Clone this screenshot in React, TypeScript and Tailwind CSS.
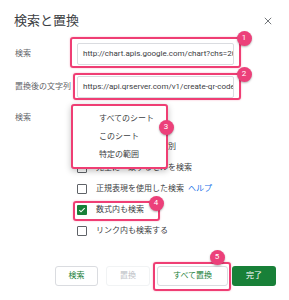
import React from "react";

const FONT = { fontFamily: 'Roboto, "Noto Sans CJK JP", "Noto Sans", sans-serif' };

function Badge({ n, x, y }: { n: number; x: number; y: number }) {
  return (
    <div
      className="absolute w-[15px] h-[15px] rounded-full bg-[#ec407a] text-white text-[8px] leading-none flex items-center justify-center shadow-[0_1px_2px_rgba(0,0,0,0.3)]"
      style={{ left: x - 7.5, top: y - 7.5 }}
    >
      {n}
    </div>
  );
}

function Pink({ x, y, w, h }: { x: number; y: number; w: number; h: number }) {
  return (
    <div
      className="absolute border-2 border-[#ef3e74] rounded-[3px] shadow-[0_0_2px_rgba(239,62,116,0.4)]"
      style={{ left: x, top: y, width: w, height: h }}
    />
  );
}

function Checkbox({ checked }: { checked?: boolean }) {
  if (checked) {
    return (
      <div className="w-[10px] h-[10px] rounded-[1px] bg-[#188038] flex items-center justify-center shrink-0">
        <svg width="8" height="8" viewBox="0 0 24 24">
          <path d="M4 12.5l5 5L20 6.5" fill="none" stroke="white" strokeWidth="3.2" />
        </svg>
      </div>
    );
  }
  return <div className="w-[10px] h-[10px] rounded-[1px] border-[1.5px] border-[#5f6368] shrink-0" />;
}

function CheckRow({ label, checked, extra }: { label: string; checked?: boolean; extra?: React.ReactNode }) {
  return (
    <div className="flex items-center h-[21px] pl-[77px]">
      <Checkbox checked={checked} />
      <span className="ml-[9px] text-[8px] text-[#3c4043] whitespace-nowrap">{label}</span>
      {extra}
    </div>
  );
}

export default function App() {
  return (
    <div className="relative w-[289px] h-[300px] bg-white overflow-hidden" style={FONT}>
      <div className="pt-[12px]">
        <div className="flex items-center justify-between h-[18px] pl-[14px] pr-[17px]">
          <span className="text-[13px] leading-[18px] text-[#3c4043]">検索と置換</span>
          <svg width="8" height="8" viewBox="0 0 10 10">
            <path d="M1 1L9 9M9 1L1 9" stroke="#5f6368" strokeWidth="1.1" />
          </svg>
        </div>

        <div className="flex items-center mt-[13px] pl-[15px]">
          <span className="w-[62px] text-[8px] text-[#5f6368] whitespace-nowrap">検索</span>
          <div className="w-[157px] h-[22px] border border-[#dadce0] rounded-[2px] pl-[5px] flex items-center overflow-hidden">
            <span className="text-[8px] text-[#3c4043] whitespace-nowrap">http://chart.apis.google.com/chart?chs=200x200&cht=qr</span>
          </div>
        </div>

        <div className="flex items-center mt-[11px] pl-[15px]">
          <span className="w-[62px] text-[8px] text-[#5f6368] whitespace-nowrap">置換後の文字列</span>
          <div className="w-[157px] h-[22px] border border-[#dadce0] rounded-[2px] pl-[5px] flex items-center overflow-hidden">
            <span className="text-[8px] text-[#3c4043] whitespace-nowrap">https://api.qrserver.com/v1/create-qr-code/</span>
          </div>
        </div>

        <div className="flex items-center mt-[9px] h-[22px] pl-[15px]">
          <span className="w-[62px] text-[8px] text-[#5f6368]">検索</span>
        </div>

        <div className="mt-[7px]">
          <CheckRow label="大文字と小文字を区別" />
          <CheckRow label="完全に一致するセルを検索" />
          <CheckRow
            label="正規表現を使用した検索"
            extra={<span className="ml-[4px] text-[8px] text-[#1a73e8]">ヘルプ</span>}
          />
          <CheckRow label="数式内も検索" checked />
          <CheckRow label="リンク内も検索する" />
        </div>

        <div className="flex justify-end items-center mt-[25px] pr-[13px]">
          <div className="w-[43px] h-[20px] border border-[#dadce0] rounded-[3px] flex items-center justify-center text-[8px] text-[#188038]">
            検索
          </div>
          <div className="ml-[8px] w-[44px] h-[20px] border border-[#f1f3f4] rounded-[3px] flex items-center justify-center text-[8px] text-[#bdc1c6]">
            置換
          </div>
          <div className="ml-[7px] w-[71px] h-[20px] border border-[#dadce0] rounded-[3px] flex items-center justify-center text-[8px] text-[#188038]">
            すべて置換
          </div>
          <div className="ml-[4px] w-[44px] h-[20px] bg-[#188038] rounded-[3px] flex items-center justify-center text-[8px] text-white">
            完了
          </div>
        </div>
      </div>

      {/* dropdown menu */}
      <div className="absolute left-[71px] top-[104px] w-[97px] h-[65px] bg-white border-2 border-[#ef3e74] rounded-[3px] shadow-[0_2px_6px_rgba(0,0,0,0.25)] flex flex-col pt-[4px]">
        <div className="h-[18px] flex items-center pl-[26px] text-[8px] text-[#3c4043] whitespace-nowrap">すべてのシート</div>
        <div className="h-[18px] flex items-center pl-[26px] text-[8px] text-[#3c4043] whitespace-nowrap">このシート</div>
        <div className="h-[18px] flex items-center pl-[26px] text-[8px] text-[#3c4043] whitespace-nowrap">特定の範囲</div>
      </div>

      <Pink x={70} y={37} w={171} h={31} />
      <Pink x={73} y={73} w={168} h={27} />
      <Pink x={73} y={201} w={87} h={20} />
      <Pink x={153} y={262} w={78} h={29} />

      <Badge n={1} x={244} y={38} />
      <Badge n={2} x={244} y={74} />
      <Badge n={3} x={166} y={127} />
      <Badge n={4} x={156} y={203} />
      <Badge n={5} x={217} y={257} />
    </div>
  );
}
